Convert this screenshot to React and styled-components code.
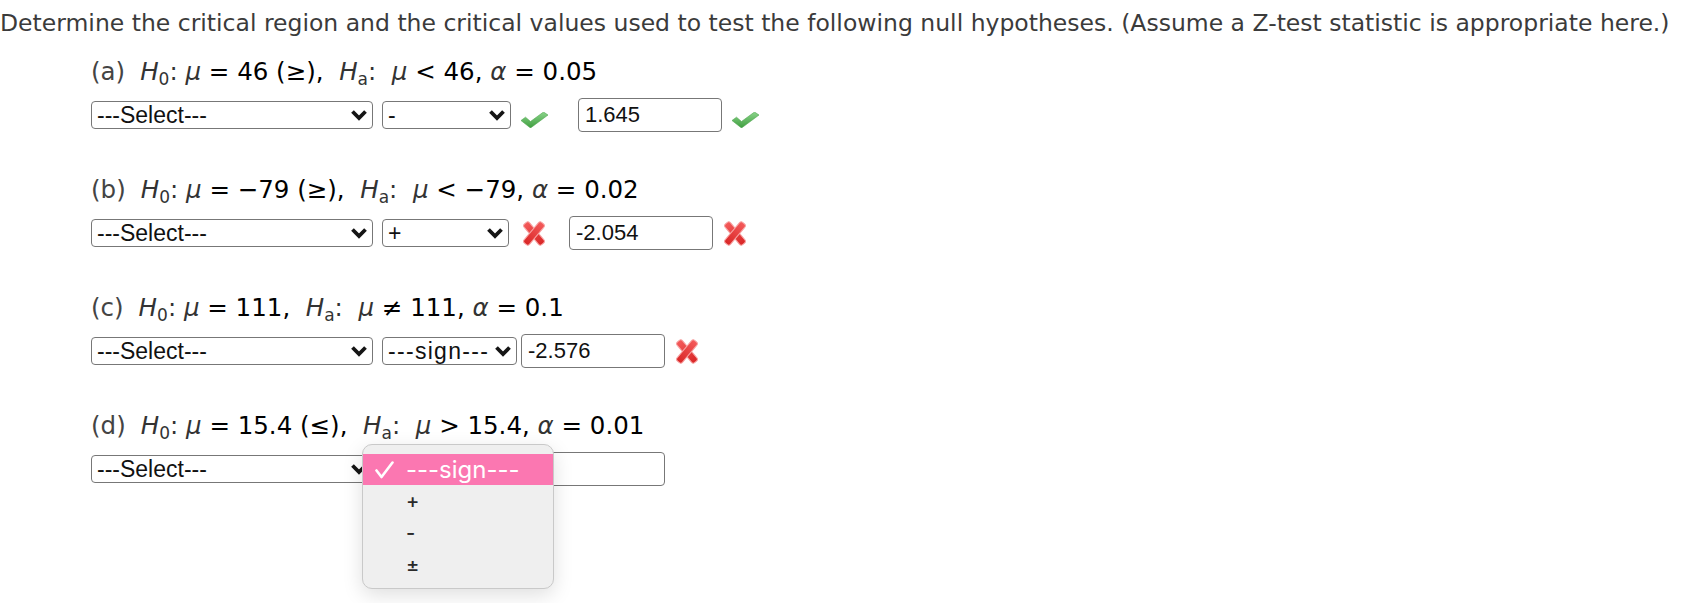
import React from "react";
import styled, { createGlobalStyle } from "styled-components";

const GlobalStyle = createGlobalStyle`
  html, body {
    margin: 0;
    padding: 0;
    background: #fff;
  }
  body {
    font-family: "DejaVu Sans", Verdana, sans-serif;
    color: #333;
  }
`;

const Page = styled.div`
  box-sizing: border-box;
  min-height: 603px;
  padding-top: 10px;
`;

const Heading = styled.p`
  margin: 0;
  font-size: 23.5px;
  line-height: 27px;
  color: #3b3b3b;
  white-space: nowrap;
`;

const Parts = styled.div`
  margin-top: 21px;
  padding-left: 91px;
  display: flex;
  flex-direction: column;
  gap: 43px;
`;

const Part = styled.div`
  display: flex;
  flex-direction: column;
  gap: 12px;
`;

const Statement = styled.div`
  height: 27px;
  font-size: 24.5px;
  line-height: 27px;
  white-space: pre;
  color: #000;
`;

const Label = styled.span`
  color: #444;
  margin-right: 15px;
`;

const Var = styled.span`
  font-style: italic;
  color: #333;
`;

const Sub = styled.span`
  font-size: 17px;
  position: relative;
  top: 5px;
  color: #333;
`;

const Gray = styled.span`
  color: #333;
`;

const Controls = styled.div`
  display: flex;
  align-items: center;
  height: 36px;
`;

const SelectBox = styled.div`
  box-sizing: border-box;
  width: ${(p) => p.$width}px;
  height: 28px;
  padding: 0 4px 0 5px;
  border: 1.5px solid #777;
  border-radius: 4px;
  background: #fff;
  display: flex;
  align-items: center;
  justify-content: space-between;
  font-family: "Liberation Sans", Arial, sans-serif;
  font-size: 23px;
  color: #111;
  white-space: nowrap;
  flex-shrink: 0;
`;

const SelectValue = styled.span`
  line-height: 1;
  letter-spacing: ${(p) => (p.$wide ? 1.3 : 0)}px;
`;

const SignWrap = styled.div`
  position: relative;
  margin-left: 9px;
  display: flex;
`;

const MarkSlot = styled.span`
  display: inline-flex;
  margin-left: ${(p) => p.$left}px;
  margin-top: ${(p) => (p.$kind === "check" ? 10 : 0)}px;
  flex-shrink: 0;
`;

const ValueInput = styled.div`
  box-sizing: border-box;
  width: 144px;
  height: 34px;
  margin-left: ${(p) => p.$offset}px;
  padding-left: 6px;
  border: 1.5px solid #777;
  border-radius: 4px;
  background: #fff;
  display: flex;
  align-items: center;
  font-family: "Liberation Sans", Arial, sans-serif;
  font-size: 22px;
  color: #111;
  flex-shrink: 0;
`;

const Menu = styled.div`
  position: absolute;
  left: -20px;
  top: -11px;
  z-index: 5;
  box-sizing: border-box;
  width: 192px;
  height: 145px;
  padding-top: 9px;
  background: #efefef;
  border: 1px solid #c9c9c9;
  border-radius: 10px;
  box-shadow: 0 6px 20px rgba(0, 0, 0, 0.13);
  font-family: Inter, "Noto Sans", sans-serif;
`;

const MenuItem = styled.div`
  height: ${(p) => (p.$active ? 31 : 32)}px;
  display: flex;
  align-items: center;
  padding-left: 12px;
  background: ${(p) => (p.$active ? "#fb77b1" : "transparent")};
  color: ${(p) => (p.$active ? "#fff" : "#2a2a2a")};
  font-size: ${(p) => (p.$active ? 24 : 20)}px;
  font-weight: ${(p) => (p.$active ? 400 : 500)};
`;

const TickSlot = styled.span`
  width: 31px;
  display: inline-flex;
  align-items: center;
`;

const Tick = () => (
  <TickSlot>
    <svg width="19" height="18" viewBox="0 0 19 18">
      <polyline
        points="1.5,9.5 6.5,16 17.5,1.5"
        fill="none"
        stroke="#fff"
        strokeWidth="2.6"
        strokeLinecap="round"
        strokeLinejoin="round"
      />
    </svg>
  </TickSlot>
);

const Chevron = () => (
  <svg width="18" height="12" viewBox="0 0 18 12">
    <polyline
      points="2.5,2.5 9,9 15.5,2.5"
      fill="none"
      stroke="#151515"
      strokeWidth="3.8"
    />
  </svg>
);

const CheckIcon = () => (
  <svg width="27" height="16" viewBox="0 0 27 16">
    <defs>
      <linearGradient id="ck" x1="0" y1="0" x2="0" y2="1">
        <stop offset="0" stopColor="#8ad48a" />
        <stop offset="1" stopColor="#3f9e3f" />
      </linearGradient>
    </defs>
    <polygon
      points="0,8.5 4.5,5.2 9.5,9.5 22.5,0 27,3 9.5,16"
      fill="url(#ck)"
      stroke="#4fa64f"
      strokeWidth="0.6"
      strokeLinejoin="round"
    />
  </svg>
);

const CrossIcon = () => (
  <svg width="24" height="25" viewBox="0 0 24 25">
    <defs>
      <linearGradient id="cx" x1="0" y1="0" x2="0" y2="1">
        <stop offset="0" stopColor="#f45b5b" />
        <stop offset="1" stopColor="#d92626" />
      </linearGradient>
    </defs>
    <g fill="url(#cx)" stroke="#f7a3a3" strokeWidth="1">
      <rect x="8.5" y="-1" width="7" height="27" rx="2.5" transform="rotate(-40 12 12.5)" />
      <rect x="8.5" y="-1" width="7" height="27" rx="2.5" transform="rotate(40 12 12.5)" />
    </g>
  </svg>
);

const Mark = ({ kind, left }) => (
  <MarkSlot $kind={kind} $left={left}>
    {kind === "check" ? <CheckIcon /> : <CrossIcon />}
  </MarkSlot>
);

const parts = [
  {
    id: "a",
    h0: "46",
    h0Rel: " (≥)",
    rel: "<",
    ha: "46",
    alpha: "0.05",
    sign: "-",
    signWidth: 129,
    signMark: "check",
    value: "1.645",
    valueMark: "check",
  },
  {
    id: "b",
    h0: "−79",
    h0Rel: " (≥)",
    rel: "<",
    ha: "−79",
    alpha: "0.02",
    sign: "+",
    signWidth: 127,
    signMark: "cross",
    value: "-2.054",
    valueMark: "cross",
  },
  {
    id: "c",
    h0: "111",
    h0Rel: "",
    rel: "≠",
    ha: "111",
    alpha: "0.1",
    sign: "---sign---",
    signWidth: 135,
    signMark: null,
    value: "-2.576",
    valueMark: "cross",
  },
  {
    id: "d",
    h0: "15.4",
    h0Rel: " (≤)",
    rel: ">",
    ha: "15.4",
    alpha: "0.01",
    sign: "---sign---",
    signWidth: 135,
    signMark: null,
    value: "",
    valueMark: null,
    open: true,
  },
];

const markLeft = { check: 10, cross: 13 };
const inputOffset = { check: 30, cross: 23 };

const SignMenu = () => (
  <Menu>
    <MenuItem $active>
      <Tick />
      ---sign---
    </MenuItem>
    <MenuItem>
      <TickSlot />+
    </MenuItem>
    <MenuItem>
      <TickSlot />-
    </MenuItem>
    <MenuItem>
      <TickSlot />±
    </MenuItem>
  </Menu>
);

export default function App() {
  return (
    <Page>
      <GlobalStyle />
      <Heading>
        Determine the critical region and the critical values used to test the
        following null hypotheses. (Assume a Z-test statistic is appropriate
        here.)
      </Heading>
      <Parts>
        {parts.map((p) => (
          <Part key={p.id}>
            <Statement>
              <Label>({p.id})</Label>
              <Var>H</Var>
              <Sub>0</Sub>
              <Gray>{": "}</Gray>
              <Var>μ</Var>
              {` = ${p.h0}${p.h0Rel},  `}
              <Var>H</Var>
              <Sub>a</Sub>
              <Gray>{":  "}</Gray>
              <Var>μ</Var>
              {` ${p.rel} ${p.ha}, `}
              <Var>α</Var>
              {` = ${p.alpha}`}
            </Statement>
            <Controls>
              <SelectBox $width={282}>
                <SelectValue>---Select---</SelectValue>
                <Chevron />
              </SelectBox>
              <SignWrap>
                <SelectBox $width={p.signWidth}>
                  <SelectValue $wide={p.sign.length > 1}>{p.sign}</SelectValue>
                  <Chevron />
                </SelectBox>
                {p.open && <SignMenu />}
              </SignWrap>
              {p.signMark && (
                <Mark kind={p.signMark} left={markLeft[p.signMark]} />
              )}
              <ValueInput $offset={p.signMark ? inputOffset[p.signMark] : 4}>
                {p.value}
              </ValueInput>
              {p.valueMark && <Mark kind={p.valueMark} left={10} />}
            </Controls>
          </Part>
        ))}
      </Parts>
    </Page>
  );
}
